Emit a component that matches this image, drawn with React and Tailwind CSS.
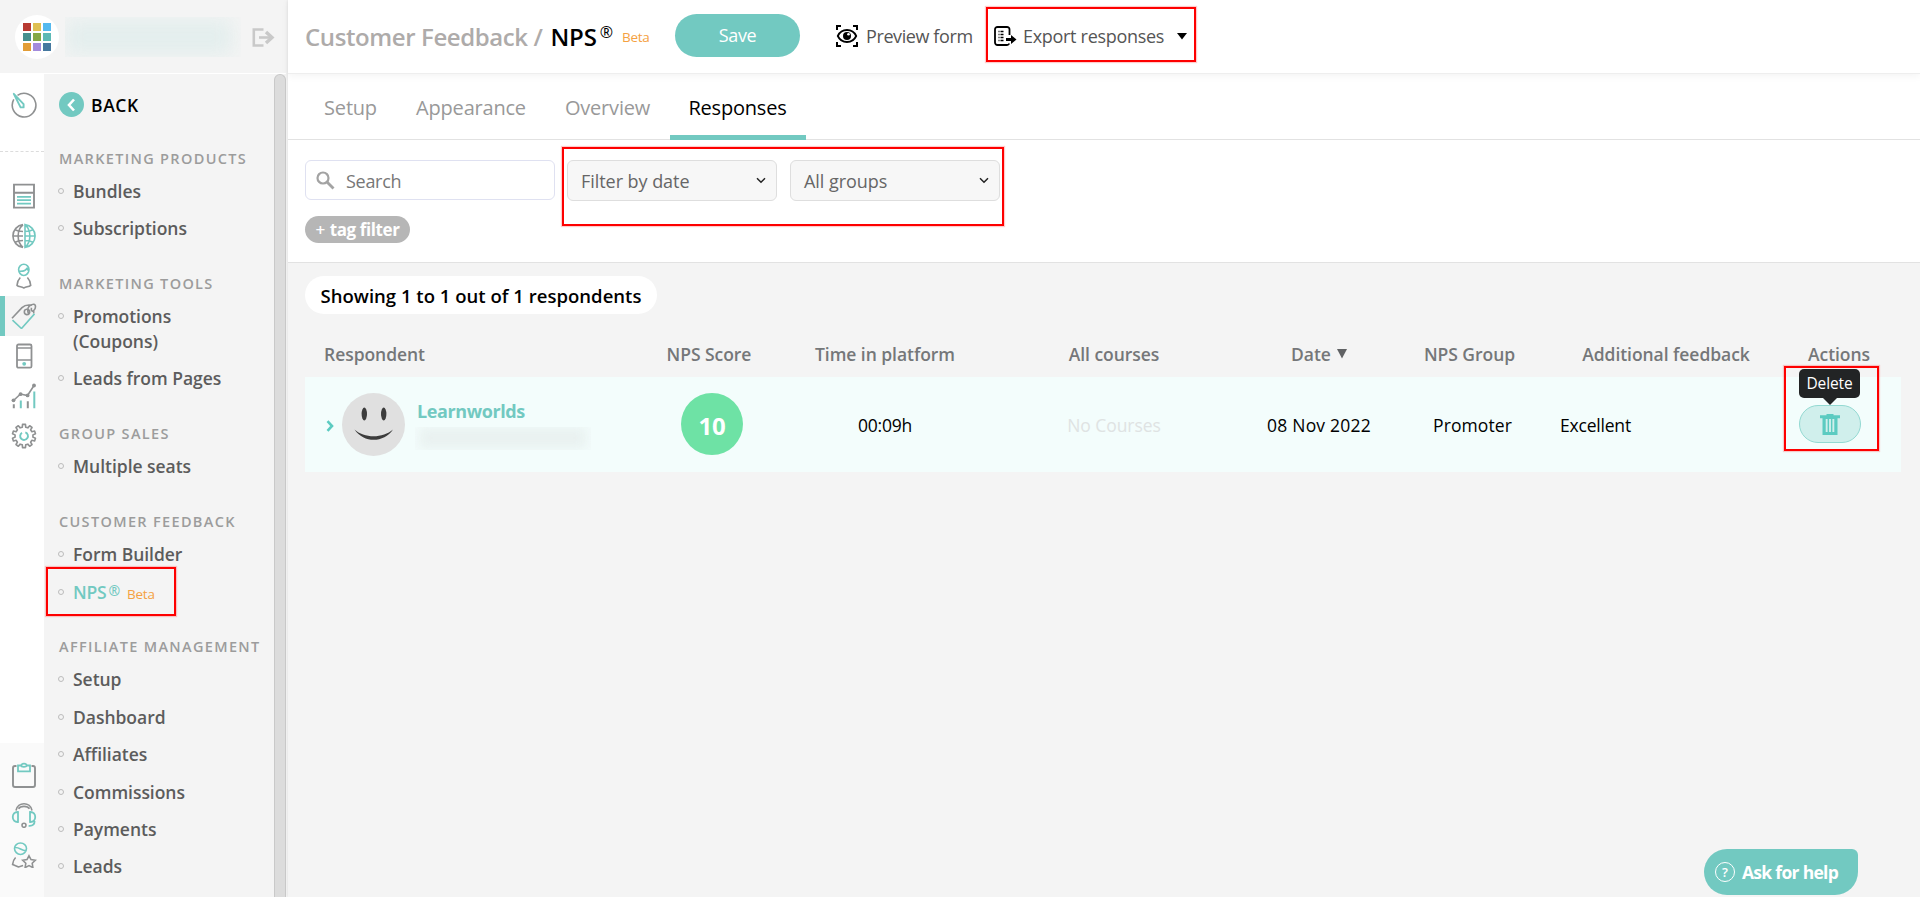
import { Fragment } from 'react'
import { clsx } from 'clsx'

const TEAL = '#72c9c1'
const GRAY = '#8f9192'

const logoColors = ['#b83a32', '#dfc052', '#55b9ee', '#46908e', '#85a845', '#5cb9b5', '#e29d37', '#a38bdc', '#45789f']

const railItems = [
  { name: 'page', icon: PageIcon },
  { name: 'globe', icon: GlobeIcon },
  { name: 'user', icon: UserIcon },
  { name: 'tag', icon: TagIcon, active: true },
  { name: 'mobile', icon: MobileIcon },
  { name: 'reports', icon: ReportsIcon },
  { name: 'settings', icon: GearIcon },
]

const navGroups = [
  {
    title: 'MARKETING PRODUCTS',
    items: [{ label: 'Bundles' }, { label: 'Subscriptions' }],
  },
  {
    title: 'MARKETING TOOLS',
    items: [{ label: 'Promotions (Coupons)', tall: true }, { label: 'Leads from Pages' }],
  },
  { title: 'GROUP SALES', items: [{ label: 'Multiple seats' }] },
  {
    title: 'CUSTOMER FEEDBACK',
    items: [{ label: 'Form Builder' }, { label: 'NPS', beta: true }],
  },
  {
    title: 'AFFILIATE MANAGEMENT',
    items: [
      { label: 'Setup' },
      { label: 'Dashboard' },
      { label: 'Affiliates' },
      { label: 'Commissions' },
      { label: 'Payments' },
      { label: 'Leads' },
    ],
  },
]

const tabs = [
  { label: 'Setup', width: 'w-[92px]' },
  { label: 'Appearance', width: 'w-[149px]' },
  { label: 'Overview', width: 'w-[124px]' },
  { label: 'Responses', width: 'w-[136px]', active: true },
]

function RailSvg({ children }) {
  return (
    <svg width="26" height="26" viewBox="0 0 26 26" fill="none" stroke={GRAY} strokeWidth="1.6">
      {children}
    </svg>
  )
}

function GaugeIcon() {
  return (
    <RailSvg>
      <path d="M6.500 3.400A11.800 11.800 0 1 1 2.800 7.400" />
      <path d="M2.800 1.800l9.800 10.400v3.200h-3z" stroke={TEAL} strokeWidth="1.900" strokeLinejoin="round" />
    </RailSvg>
  )
}

function PageIcon() {
  return (
    <RailSvg>
      <path d="M3 1.600h20v23H3zM3 9.800h20" strokeWidth="1.900" />
      <path d="M6 13.800h14M6 17.200h14M6 20.600h14" stroke={TEAL} strokeWidth="1.700" />
    </RailSvg>
  )
}

function GlobeIcon() {
  return (
    <RailSvg>
      <path d="M12 1.500a11.600 11.600 0 0 0 0 23M12 1.800C5.500 7 5.500 19 12 24.200M1.400 13H12M3.600 6.500C6 8 9 8.500 12 8.500M3.600 19.500C6 18 9 17.500 12 17.500" />
      <path d="M14 1.500a11.600 11.600 0 0 1 0 23zM14 1.800c6.500 5.200 6.500 17.200 0 22.400M14 13h10.600M14 8.500c3 0 6-.5 8.400-2M14 17.500c3 0 6 .5 8.400 2" stroke={TEAL} />
    </RailSvg>
  )
}

function UserIcon() {
  return (
    <RailSvg>
      <path d="M9.300 14.500C7.300 16.500 6.300 19.500 6 22.300c1.500 1.400 3.500 1.300 6.800 2.600 3.300-1.300 5.300-1.200 6.900-2.600-.3-2.800-1.300-5.800-3.300-7.800" />
      <path d="M7.600 6.500a5.200 5.200 0 1 1 10.400 0c0 3-2.300 6-5.200 6s-5.200-3-5.200-6zM8 8.200c3.600.3 7-.8 8.200-3.400.1 1.700.7 2.800 1.600 3.200" stroke={TEAL} />
    </RailSvg>
  )
}

function TagIcon() {
  return (
    <RailSvg>
      <path d="M1 15.300L11 4.600c2.500-2.400 5.500-3 9-2.500l1 .2M15.600 11.600a2.700 2.700 0 1 1 3-3.500c.5 2-.7 3.600-3 3.500zM17.500 10.500c-2.500-6 2-9.400 5.200-9.300 2.500.2 2.300 4.300 0 6.300-1.500 1.300-3 0-2.200-2.700M22.700 7.500v3" />
      <path d="M1.500 17.200l9 8.300 13-14.600" stroke={TEAL} />
    </RailSvg>
  )
}

function MobileIcon() {
  return (
    <RailSvg>
      <rect x="6" y="1.500" width="14.500" height="23.200" rx="1.500" strokeWidth="1.800" />
      <path d="M6 5h14.500M6 17h14.500" />
      <circle cx="13.200" cy="20.800" r="1.900" fill={TEAL} stroke="none" />
    </RailSvg>
  )
}

function ReportsIcon() {
  return (
    <RailSvg>
      <path d="M2.500 17.500l7-6.500 7 1.500 6.500-10" />
      <g fill={GRAY} stroke="none">
        <circle cx="2.500" cy="17.300" r="1.900" />
        <circle cx="9.600" cy="11.200" r="1.900" />
        <circle cx="16.600" cy="12.400" r="1.900" />
        <circle cx="23" cy="2.500" r="1.900" />
      </g>
      <path d="M2.800 21.300v4M16.800 18.300v7" strokeWidth="2" />
      <path d="M9.800 17.500v7.800M23.300 8.500v16.800" stroke={TEAL} strokeWidth="2" />
    </RailSvg>
  )
}

function GearIcon() {
  const teeth = 10
  const points = []
  for (let i = 0; i < teeth; i++) {
    const step = (Math.PI * 2) / teeth
    const corners = [[-0.3, 9], [-0.2, 11.7], [0.2, 11.7], [0.3, 9]]
    corners.forEach(([offset, r]) => {
      const a = i * step + offset * step - Math.PI / 2
      points.push(`${(13 + r * Math.cos(a)).toFixed(2)},${(13 + r * Math.sin(a)).toFixed(2)}`)
    })
  }
  return (
    <RailSvg>
      <polygon points={points.join(' ')} strokeLinejoin="round" />
      <path d="M10 10.600a3.900 3.900 0 1 0 3-1.500" stroke={TEAL} strokeWidth="1.900" transform="rotate(20 13 13)" />
    </RailSvg>
  )
}

function ClipboardIcon() {
  return (
    <RailSvg>
      <path d="M5.500 4H4a2 2 0 0 0-2 2v17a2 2 0 0 0 2 2h18a2 2 0 0 0 2-2V6a2 2 0 0 0-2-2h-1.500" strokeWidth="1.900" />
      <path d="M7 3.500h3.200c.5-2.500 5.100-2.500 5.600 0H19v5.800H7zM10.200 3.500c0 1.800 5.600 1.800 5.600 0" stroke={TEAL} strokeWidth="1.800" />
    </RailSvg>
  )
}

function HeadsetIcon() {
  return (
    <RailSvg>
      <path d="M5 8.500c1.500-9 14.500-9 16 0M7.500 6.700C9.500 3.600 16.500 3.600 18.500 6.700" />
      <circle cx="13" cy="23.300" r="2" />
      <path d="M7 10v10c-7 .5-7-10.500 0-10zM19 10v10c7 .5 7-10.500 0-10zM23.600 19c0 3-1.500 5.300-6 4.800" stroke={TEAL} strokeWidth="1.800" />
    </RailSvg>
  )
}

function UserStarIcon() {
  return (
    <RailSvg>
      <path d="M4.600 15.500C2.500 17.500 2 20 1.600 22.500c2 1 4 1.500 6 2.500l4.500-1.500" />
      <path d="M18 13.800l2 3.800 4.300.7-3.100 3 .7 4.300-3.900-2-3.900 2 .7-4.300-3.100-3 4.300-.7z" />
      <path d="M3.500 6.500a6 5.500 0 1 1 12 0c0 3-2.800 6-6 6s-6-3-6-6zM4 5.500c4.500-.5 6 3 11 3.200" stroke={TEAL} />
    </RailSvg>
  )
}

function SidebarHeader() {
  return (
    <div className="flex h-[73px] shrink-0 items-center bg-[#f4f4f4]">
      <div className="ml-[15px] flex size-11 items-center justify-center rounded-full bg-white">
        <div className="grid grid-cols-3 gap-[2px]">
          {logoColors.map(color => (
            <div key={color} className="size-2" style={{ backgroundColor: color }} />
          ))}
        </div>
      </div>
      <div className="ml-[6px] flex h-10 w-[176px] items-center overflow-hidden">
        <div className="h-9 w-[168px] bg-[#e3eeed] blur-[10px]" />
      </div>
      <svg className="ml-[10px] mt-[2px]" width="24" height="22" viewBox="0 0 24 22" fill="none" stroke="#c9c9c9" strokeWidth="2.600">
        <path d="M12.500 2.500H2.800v16h9.700" />
        <path d="M8 10.500h12" />
        <path d="M15 5l6 5.500-6 5.500" strokeWidth="3.400" />
      </svg>
    </div>
  )
}

function Rail() {
  return (
    <div className="flex w-11 shrink-0 flex-col bg-white">
      <div className="flex h-[78px] justify-center border-b border-dashed border-[#dcdcdc] pl-1 pt-[18px]">
        <GaugeIcon />
      </div>
      <div className="mt-6">
        {railItems.map(item => (
          <div
            key={item.name}
            className={clsx(
              'flex h-10 items-center justify-center border-l-[5px] pr-px pb-px',
              item.active ? 'border-[#72c9c1] bg-[#f4f4f4]' : 'border-transparent'
            )}
          >
            <item.icon />
          </div>
        ))}
      </div>
      <div className="mt-auto flex h-[154px] flex-col bg-[#fafafa] pl-[4px] pt-[12px]">
        {[ClipboardIcon, HeadsetIcon, UserStarIcon].map((Icon, i) => (
          <div key={i} className="flex h-10 items-center justify-center">
            <Icon />
          </div>
        ))}
      </div>
    </div>
  )
}

function NavItem({ item }) {
  return (
    <li className={clsx('flex pt-[6px]', item.tall ? 'h-[62.300px]' : 'h-[37.400px]')}>
      <span className="mt-[9px] size-[6px] rounded-full border border-[#bcbcbc]" />
      <span
        className={clsx(
          'ml-[9px] text-[17.500px] font-semibold leading-[25px]',
          item.tall ? 'w-[120px]' : 'w-[170px]',
          item.beta ? 'tracking-[-0.200px] text-[#72c9c1]' : 'tracking-[-0.030px] text-[#5c5c5c]'
        )}
      >
        {item.label}
        {item.beta && (
          <Fragment>
            <span className="relative -top-[3px] ml-[2px] text-[14px]">®</span>
            <span className="ml-[7px] text-[13.500px] font-normal text-[#f5a142]">Beta</span>
          </Fragment>
        )}
      </span>
    </li>
  )
}

function Sidebar() {
  return (
    <aside className="flex h-full w-[286px] shrink-0 flex-col">
      <SidebarHeader />
      <div className="flex min-h-0 flex-1 border-t border-white">
        <Rail />
        <nav className="w-[230px] shrink-0 overflow-hidden bg-[#f4f4f4] pl-[15px]">
          <div className="flex h-[69.800px] items-center pb-[8px]">
            <span className="flex size-[25px] items-center justify-center rounded-full bg-[#72c9c1]">
              <svg width="12" height="14" viewBox="0 0 12 14" fill="none" stroke="#fff" strokeWidth="2.600">
                <path d="M8 1.500L3 7l5 5.500" />
              </svg>
            </span>
            <span className="ml-[7px] text-[17.500px] font-semibold tracking-[0.600px] text-black">BACK</span>
          </div>
          {navGroups.map(group => (
            <section key={group.title} className="mb-[21.500px]">
              <h3 className="h-[29px] text-[14.500px] font-semibold leading-[29px] tracking-[1.330px] whitespace-nowrap text-[#9c9c9c]">{group.title}</h3>
              <ul className="-ml-px">
                {group.items.map(item => (
                  <NavItem key={item.label} item={item} />
                ))}
              </ul>
            </section>
          ))}
        </nav>
        <div className="w-3 shrink-0 rounded-t-md border-x border-t border-[#c9c9c9] bg-[#dcdcdc]" />
      </div>
    </aside>
  )
}

function PreviewIcon() {
  return (
    <svg width="22" height="22" viewBox="0 0 22 22" fill="none" stroke="#000" strokeWidth="2">
      <path d="M1 5V1h4M17 1h4v4M21 17v4h-4M5 21H1v-4" />
      <path d="M1.800 11C5.500 3 16.500 3 20.200 11 16.500 19 5.500 19 1.800 11z" strokeWidth="1.800" />
      <circle cx="11" cy="11" r="4" fill="#000" stroke="none" />
      <circle cx="12.500" cy="9.300" r="1.300" fill="#fff" stroke="none" />
    </svg>
  )
}

function ExportIcon() {
  return (
    <svg width="23" height="20" viewBox="0 0 23 20" fill="none" stroke="#000" strokeWidth="1.800">
      <path d="M15.500 9V3.500a2.500 2.500 0 0 0-2.500-2.500H3.500A2.500 2.500 0 0 0 1 3.500v13A2.500 2.500 0 0 0 3.500 19H13a2.500 2.500 0 0 0 2.300-1.500" />
      <path d="M4.500 5.500h1M6.500 5.500h3M4.500 8.500h1M6.500 8.500h3M4.500 11.500h1M6.500 11.500h3M4.500 14.500h1M6.500 14.500h3" strokeWidth="1.500" />
      <path d="M12 12h5V9l5.500 4.500L17 18v-3h-5z" fill="#000" stroke="none" />
    </svg>
  )
}

function TopBar() {
  return (
    <header className="relative z-10 flex h-[74px] shrink-0 items-center border-b border-[#eeeeee] bg-white pl-[17px] shadow-[0_2px_8px_rgba(0,0,0,0.050)]">
      <h1 className="flex w-[370px] items-center text-[24px] whitespace-nowrap">
        <span className="font-semibold tracking-[-0.400px] text-[#aeabaa]">Customer Feedback /</span>
        <span className="ml-[8px] font-semibold tracking-[-0.200px] text-black">NPS</span>
        <span className="-mt-[9px] ml-[3px] text-[16px] text-black">®</span>
        <span className="ml-[9px] mt-[2px] text-[13.500px] tracking-[-0.300px] text-[#f5a142]">Beta</span>
      </h1>
      <button className="-mt-[3px] h-[43px] w-[125px] rounded-full bg-[#72c9c1] pt-px text-[18px] tracking-[-0.400px] text-white">Save</button>
      <button className="ml-9 flex items-center whitespace-nowrap">
        <span className="-mt-px">
          <PreviewIcon />
        </span>
        <span className="ml-2 w-[107px] text-left text-[18px] tracking-[-0.400px] text-[#555]">Preview form</span>
      </button>
      <button className="ml-[21px] flex items-center whitespace-nowrap">
        <span className="-mt-px">
          <ExportIcon />
        </span>
        <span className="ml-[6px] w-[141px] text-left text-[18px] tracking-[-0.300px] text-[#555]">Export responses</span>
        <svg className="ml-[13px] -mt-px" width="10" height="7" viewBox="0 0 10 7">
          <path d="M0 0h10L5 6.500z" />
        </svg>
      </button>
    </header>
  )
}

function Tabs() {
  return (
    <div className="flex h-[66px] shrink-0 border-b border-[#e2e2e2] bg-white pl-[17px]">
      {tabs.map(tab => (
        <div
          key={tab.label}
          className={clsx(
            '-mb-px flex items-center justify-center border-b-[5px] pr-px pt-[6px] text-[20px] tracking-[-0.200px] whitespace-nowrap',
            tab.width,
            tab.active ? 'border-[#72c9c1] text-black' : 'border-transparent text-[#999]'
          )}
        >
          {tab.label}
        </div>
      ))}
    </div>
  )
}

function Select({ label }) {
  return (
    <div className="flex h-[41px] w-[210px] items-center justify-between rounded-md border border-[#dedede] bg-[#f7f7f7] pl-[13px] pr-[9px] text-[18px] tracking-[-0.050px] text-[#666]">
      <span className="pt-px">{label}</span>
      <svg className="mr-px" width="10" height="7" viewBox="0 0 10 7" fill="none" stroke="#222" strokeWidth="1.500">
        <path d="M1 1.200l4 4 4-4" />
      </svg>
    </div>
  )
}

function Filters() {
  return (
    <div className="flex h-[123px] shrink-0 flex-col border-b border-[#e2e2e2] bg-white pl-[17px] pt-5">
      <div className="flex">
        <div className="flex h-10 w-[250px] items-center rounded-md border border-[#dfe1f1] pl-[10px]">
          <svg width="19" height="19" viewBox="0 0 19 19" fill="none" stroke="#a3a3a3">
            <circle cx="7" cy="7" r="5.500" strokeWidth="2.200" />
            <path d="M11 11l6.500 6.500" strokeWidth="2.800" />
          </svg>
          <span className="ml-[11px] pt-[2px] text-[18px] tracking-[-0.300px] text-[#777]">Search</span>
        </div>
        <div className="ml-3 flex gap-[13px]">
          <Select label="Filter by date" />
          <Select label="All groups" />
        </div>
      </div>
      <span className="mt-[15px] flex h-[27px] w-[105px] items-center justify-center rounded-full bg-[#b6b6b6] pt-px text-[17px] font-bold tracking-[-0.400px] whitespace-nowrap text-white">
        <span className="mr-[5px] font-semibold">+</span>
        tag filter
      </span>
    </div>
  )
}

function Avatar() {
  return (
    <svg width="63" height="63" viewBox="0 0 63 63">
      <circle cx="31.500" cy="31.500" r="31.500" fill="#e0e0e0" />
      <g fill="#3c3c3c">
        <ellipse cx="22.300" cy="21" rx="2.700" ry="6.500" />
        <ellipse cx="41.700" cy="21" rx="2.700" ry="6.500" />
        <path d="M12.500 36.500C22 45.500 41 45.500 51 36.500 42 50 22 50.500 12.500 36.500z" />
      </g>
    </svg>
  )
}

function DeleteAction() {
  return (
    <div className="relative">
      <button className="flex h-[38px] w-[62px] items-center justify-center rounded-full border border-[#93d9d2] bg-[#d0efec]">
        <svg width="20" height="21" viewBox="0 0 20 21" fill="#5ccbc1">
          <path d="M6.500 0h7v1.300H20v3h-2.500V21h-15V4.300H0v-3h6.500zM5.700 5v13h1.900V5zM9.050 5v13h1.900V5zM12.400 5v13h1.900V5z" fillRule="evenodd" />
        </svg>
      </button>
      <div className="absolute -top-9 left-0 flex h-[29px] w-[61px] items-center justify-center rounded-[5px] bg-[#222425] text-[15.500px] tracking-[-0.100px] text-white">
        Delete
        <svg className="absolute left-[23px] top-[28px]" width="16" height="8" viewBox="0 0 16 8" fill="#222425">
          <path d="M0 0h16L8 8z" />
        </svg>
      </div>
    </div>
  )
}

function ResponsesTable() {
  const columns = 'grid grid-cols-[335px_138px_214px_244px_166px_135px_258px_106px] items-center justify-items-center whitespace-nowrap text-[17.500px]'

  return (
    <div className="mt-[19px] w-[1596px]">
      <div className={clsx(columns, 'h-11 pb-[2px] font-semibold tracking-[-0.050px] text-[#757779]')}>
        <div className="justify-self-start pl-[19px]">Respondent</div>
        <div>NPS Score</div>
        <div>Time in platform</div>
        <div>All courses</div>
        <div className="flex items-center gap-[6px]">
          Date
          <svg width="10" height="10" viewBox="0 0 10 10" fill="#606264">
            <path d="M0 0h10L5 9.500z" />
          </svg>
        </div>
        <div>NPS Group</div>
        <div>Additional feedback</div>
        <div className="justify-self-start pl-[13px]">Actions</div>
      </div>
      <div className={clsx(columns, 'h-[95px] bg-[#f3fdfc] tracking-[-0.200px] text-black')}>
        <div className="flex items-center justify-self-start pb-px pl-[21px]">
          <svg className="mt-1" width="8" height="12" viewBox="0 0 8 12" fill="none" stroke="#5ccbc1" strokeWidth="2.600">
            <path d="M1.500 1.200L6 6l-4.500 4.800" />
          </svg>
          <div className="ml-[8px]">
            <Avatar />
          </div>
          <div className="ml-[10px]">
            <div className="-mt-px pl-[2px] text-[18px] font-bold leading-[26px] tracking-[-0.400px] text-[#72c9c1]">Learnworlds</div>
            <div className="mt-[3px] flex h-[23px] w-[176px] items-center overflow-hidden">
              <div className="ml-1 h-[22px] w-[168px] bg-[#e9f1f0] blur-[6px]" />
            </div>
          </div>
        </div>
        <div className="mb-px ml-[6px] flex size-[62px] items-center justify-center rounded-full bg-[#6ee2a5] pt-[3px] text-[24px] font-bold text-white">10</div>
        <div className="pt-px">00:09h</div>
        <div className="pt-px tracking-[-0.050px] text-[#dfe3e3]">No Courses</div>
        <div className="pt-px tracking-[0.200px]">08 Nov 2022</div>
        <div className="pl-[6px] pt-px tracking-[0.100px]">Promoter</div>
        <div className="justify-self-start pl-[23px] pt-px">Excellent</div>
        <div className="mb-px justify-self-start pl-[4px]">
          <DeleteAction />
        </div>
      </div>
    </div>
  )
}

function HelpButton() {
  return (
    <button className="absolute bottom-[2px] right-[62px] flex h-[46px] w-[154px] items-center rounded-[23px] rounded-tr-[6px] bg-[#72c9c1] pl-[11px] text-white">
      <span className="flex size-5 items-center justify-center rounded-full border-[1.500px] border-white text-[13px] font-semibold leading-none">?</span>
      <span className="ml-[7px] text-[17.500px] font-bold tracking-[-0.700px] whitespace-nowrap">Ask for help</span>
    </button>
  )
}

// Red outlines that call out parts of the screen
function Highlights() {
  const boxes = [
    'left-[986px] top-[7px] w-[210px] h-[55px]',
    'left-[562px] top-[147px] w-[442px] h-[79px]',
    'left-[46px] top-[567px] w-[130px] h-[49px]',
    'left-[1784px] top-[366px] w-[95px] h-[85px]',
  ]
  return boxes.map(box => (
    <div key={box} className={clsx('pointer-events-none absolute z-20 border-2 border-[#fe0000] shadow-[0_0_1px_1px_rgba(255,0,0,0.200)]', box)} />
  ))
}

export default function App() {
  return (
    <div className="relative flex h-[897px] w-[1920px] overflow-hidden bg-[#f4f4f4] font-['Open_Sans','Noto_Sans',sans-serif]">
      <Sidebar />
      <main className="ml-[2px] flex min-w-0 flex-1 flex-col shadow-[0_0_3px_rgba(0,0,0,0.100)]">
        <TopBar />
        <Tabs />
        <Filters />
        <div className="pl-[17px] pt-[13px]">
          <div className="flex h-[38px] w-[352px] items-center justify-center rounded-full bg-white pt-[2px] text-[18.500px] font-semibold tracking-[0.020px] whitespace-nowrap text-black">
            Showing 1 to 1 out of 1 respondents
          </div>
          <ResponsesTable />
        </div>
      </main>
      <HelpButton />
      <Highlights />
    </div>
  )
}
